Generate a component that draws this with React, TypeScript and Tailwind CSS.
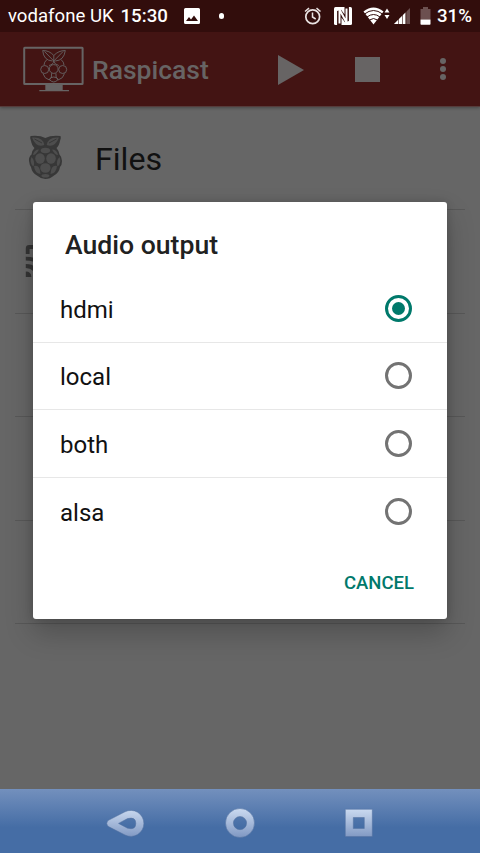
import { useState } from 'react';

const outputs = ['hdmi', 'local', 'both', 'alsa'];

function StatusBar() {
  return (
    <div className="relative z-20 flex h-8 shrink-0 items-center bg-[#320d0c] text-white">
      <span className="ml-2 w-[107px] whitespace-nowrap text-[18.6px] leading-8">vodafone UK</span>
      <span className="ml-[5.5px] w-[50.5px] whitespace-nowrap text-[18.7px] font-medium leading-8">15:30</span>
      <svg className="ml-[13px]" width="16" height="16" viewBox="0 0 16 16">
        <path fill="#fff" fillRule="evenodd" d="M1.5 0h13Q16 0 16 1.500v13Q16 16 14.500 16h-13Q0 16 0 14.500v-13Q0 0 1.500 0zM2 13h12L10 7.500 7 11.500 5 9z" />
      </svg>
      <span className="ml-[18.5px] h-[5.5px] w-[5.5px] rounded-full bg-white" />
      <svg className="absolute left-[300px] top-0" width="136" height="32" viewBox="300 0 136 32" fill="none">
        {/* alarm */}
        <g stroke="#e9e2e2" strokeWidth="1.700">
          <circle cx="312.700" cy="16.700" r="6.900" />
          <path d="M312.500 12.500v4.500l3.200 2M305 11.500l4-3.300M320.500 11.500l-4-3.300" strokeWidth="1.500" />
        </g>
        {/* nfc */}
        <rect x="334" y="7" width="18" height="18" rx="1.500" fill="#fff" />
        <path d="M339.300 25V11l7.400 10V7" stroke="#320d0c" strokeWidth="4.400" strokeLinejoin="bevel" />
        <path d="M339.500 23.500V9.500l7 13V8.500" stroke="#fff" strokeWidth="2" strokeLinejoin="bevel" />
        {/* wifi */}
        <path fill="#fff" d="M363.500 11.500Q373.500 3.500 383.500 11.500L373.500 24.500z" />
        <path d="M364.500 14Q373.500 7 382.500 14M367 17Q373.500 12 380 17M369.500 20Q373.500 17 377.500 20" stroke="#320d0c" strokeWidth="1" />
        <path fill="#fff" d="M387 8.500l2.500 4h-5zM387 19l2.500-4h-5z" />
        {/* signal */}
        <path fill="#6c5050" d="M410 8v16h-16z" />
        <path fill="#fff" d="M405.500 12.500V24H394z" />
        <path d="M398.500 17v7M402.500 13v11M406 10v14" stroke="#320d0c" strokeWidth=".6" />
        {/* battery */}
        <path fill="#6c5050" d="M423 7h5v2h2.500v10.500h-10V9h2.500z" />
        <path fill="#fff" d="M420.500 19.500h10V24q0 .7-.7.700h-8.600q-.7 0-.7-.7z" />
      </svg>
      <span className="absolute left-[437px] whitespace-nowrap text-[18.700px] font-medium leading-8">31%</span>
    </div>
  );
}

function Logo() {
  return (
    <svg width="62" height="48" viewBox="23 46 62 48" fill="none">
      <rect x="24.200" y="47.700" width="58.400" height="36.200" rx=".5" stroke="#676464" strokeWidth="2" />
      <path fill="#676464" d="M45.300 84.500h17.400V90H69v1.300H39.300V90h6z" />
      <g stroke="#676464" strokeWidth=".9">
        <path d="M53.800 55.500Q49.500 50.500 42.700 50.500Q43.500 60.500 52.500 61M53.800 55.500Q58.500 50.500 65.300 50.500Q64 60.500 55.200 61" />
        <path d="M44.500 51.500l9.300 9.500 9.300-9.500M53.800 55.500v6" />
        <path d="M47 59.500q-3 2.500-3 5.500M61 59.500q3 2.500 3 5.500M49 65.500q4.500-1 4.800-4.500q.5 3.500 5 4.500" />
        <circle cx="44.700" cy="69.500" r="4" />
        <circle cx="62.700" cy="69.500" r="4" />
        <circle cx="53.700" cy="69" r="4.400" />
        <path d="M43 73.500q1.200 5 6.300 6.500q3-2.500 2.300-6.800M64.500 73.500q-1.200 5-6.300 6.500q-3-2.500-2.300-6.800" />
        <path d="M49.300 79.500q1-2.500 4.400-2.500t4.500 2.500q-2.500 2.500-4.500 2.500t-4.400-2.500z" />
      </g>
    </svg>
  );
}

function Toolbar() {
  return (
    <div className="flex h-[75px] shrink-0 items-center border-b border-[#563c3b] bg-[#431413] shadow-[0_1px_3px_rgba(0,0,0,.3)]">
      <div className="ml-[23px] mt-px"><Logo /></div>
      <h1 className="ml-[7px] mt-[2px] w-[118px] whitespace-nowrap text-[26.500px] font-medium leading-8 text-[#676464]">Raspicast</h1>
      <svg className="ml-[68px] mt-px" width="26" height="30" viewBox="0 0 26 30" fill="#676464">
        <path d="M0 0l26 15L0 30z" />
      </svg>
      <div className="ml-[50.5px] h-[25px] w-[25px] bg-[#676464]" />
      <div className="ml-[60px] flex flex-col gap-[2px]">
        <span className="h-[6px] w-[6px] rounded-full bg-[#676464]" />
        <span className="h-[6px] w-[6px] rounded-full bg-[#676464]" />
        <span className="h-[6px] w-[6px] rounded-full bg-[#676464]" />
      </div>
    </div>
  );
}

function Raspberry() {
  return (
    <svg width="34" height="46" viewBox="28 135 34 46" strokeLinejoin="round">
      <path
        fill="#373737"
        d="M45.300 138Q40 135 30.500 136Q29.500 138 31 141Q32 146 34.500 148Q31.500 151 31.500 154.500Q28.500 157 29 161Q29.500 165 31 167Q32 173 37 175.500Q41 179 45.300 179Q50 179 54 175.500Q59 173 60 167Q62 165 62 161Q62 157 59.500 154.500Q59 151 56.500 148Q59 146 60 141Q61.500 138 60.500 136Q51 135 45.300 138z"
      />
      <g fill="#4d4d4d">
        <path d="M32 137.500Q43 136.500 44.300 145Q36 148 32 137.500zM59 137.500Q48 136.500 46.700 145Q55 148 59 137.500z" />
        <ellipse cx="45.400" cy="150.500" rx="4.700" ry="2.700" />
        <ellipse cx="40" cy="158.500" rx="4.800" ry="5.200" />
        <ellipse cx="51" cy="158.500" rx="4.800" ry="5.200" />
        <ellipse cx="45.400" cy="168" rx="5.200" ry="4.800" />
        <path d="M39 149.500Q34 149.500 33 155Q36 155 39 149.500zM52 149.500Q57 149.500 58 155Q55 155 52 149.500z" />
        <path d="M31.500 157Q35.500 161 33.500 166.500Q29 163 31.500 157zM59.500 157Q55.500 161 57.500 166.500Q62 163 59.500 157z" />
        <path d="M34 166Q40 164.500 40.500 174Q34.500 173 34 166zM57 166Q51 164.500 50.500 174Q56.500 173 57 166z" />
        <ellipse cx="45.400" cy="175.800" rx="4" ry="1.800" />
      </g>
      <path fill="none" stroke="#373737" strokeWidth="1" d="M34.500 139l7.500 4M56.500 139l-7.500 4" />
    </svg>
  );
}

function FileList() {
  return (
    <div className="flex-1 px-[15px]">
      <div className="flex h-[103px] items-center border-b border-[#585858]">
        <div className="ml-[13px]"><Raspberry /></div>
        <span className="ml-[33px] mt-[2px] text-[32.200px] leading-10 text-[#111]">Files</span>
      </div>
      <div className="h-[103.500px] border-b border-[#585858] pl-[10px] pt-[35px]">
        <svg width="40" height="34" viewBox="25 245 40 34" fill="none" stroke="#353535" strokeWidth="3.800">
          <path d="M27.700 254v-5.500q0-1.500 1.500-1.500h31q2 0 2 2v26q0 2-2 2H48" />
          <path d="M25.800 258.700q18 0 18 19M25.800 266q11 0 11 12" />
          <path d="M25.800 271.500q5.500 0 5.500 5.500h-5.500z" fill="#353535" stroke="none" />
        </svg>
      </div>
      <div className="h-[103.500px] border-b border-[#585858]" />
      <div className="h-[103.500px] border-b border-[#585858]" />
      <div className="h-[103.500px] border-b border-[#585858]" />
    </div>
  );
}

function AudioDialog() {
  const [selected, setSelected] = useState('hdmi');

  return (
    <div className="absolute left-[33px] top-[202px] flex h-[417px] w-[414px] flex-col rounded-[3px] bg-white shadow-[0_14px_28px_rgba(0,0,0,.22),0_0_8px_rgba(0,0,0,.16)]">
      <h2 className="h-[73px] pl-8 pt-[27px] text-[26.6px] font-medium leading-8 text-[#212121]">Audio output</h2>
      <div className="divide-y-[1.500px] divide-[#e7e7e7]">
        {outputs.map((name) => (
          <button
            key={name}
            onClick={() => setSelected(name)}
            className="flex h-[67.500px] w-full items-center justify-between pl-[27px] pr-[35px] text-[#111]"
          >
            <span className="pt-[2.5px] text-[24px] leading-8">{name}</span>
            <span
              className={`flex h-[27px] w-[27px] items-center justify-center rounded-full border-[3px] ${
                selected === name ? 'border-[#00796b]' : 'border-[#737373]'
              }`}
            >
              {selected === name && <span className="h-[13px] w-[13px] rounded-full bg-[#00796b]" />}
            </span>
          </button>
        ))}
      </div>
      <div className="flex flex-1 justify-end pr-[33px] pt-[22px]">
        <button className="h-8 text-[18.500px] font-medium leading-8 text-[#00796b]">CANCEL</button>
      </div>
    </div>
  );
}

function NavBar() {
  return (
    <div className="flex h-16 shrink-0 bg-linear-to-b from-[#7390bd] via-[#456da5] via-60% to-[#456da5]">
      <svg width="480" height="64" viewBox="0 0 480 64">
        <defs>
          <linearGradient id="key" x1="0" y1="20" x2="0" y2="48" gradientUnits="userSpaceOnUse">
            <stop offset="0" stopColor="#cbdaf0" />
            <stop offset="1" stopColor="#8199c3" />
          </linearGradient>
        </defs>
        <g fill="url(#key)" fillRule="evenodd" stroke="#53709e" strokeWidth=".5">
          <path d="M108 31.500L125 22.800A13 13 0 1 1 125 46L108 37.300Q105.500 34.400 108 31.500zM118.500 34.400l9-4.800Q135.800 27.500 135.800 34.400T127.500 39.200z" />
          <path d="M240 19.500a14.500 14.500 0 1 0 0 29 14.500 14.500 0 1 0 0-29zM240 27.500a6.600 6.600 0 1 1 0 13.200 6.600 6.600 0 1 1 0-13.200z" />
          <path d="M345.300 20.300h27v27.300h-27zM353.300 28.500v11h11v-11z" />
        </g>
      </svg>
    </div>
  );
}

export default function App() {
  return (
    <div className="relative flex h-[853px] w-[480px] flex-col overflow-hidden bg-[#666] font-[Roboto,sans-serif]">
      <StatusBar />
      <Toolbar />
      <FileList />
      <AudioDialog />
      <NavBar />
    </div>
  );
}
